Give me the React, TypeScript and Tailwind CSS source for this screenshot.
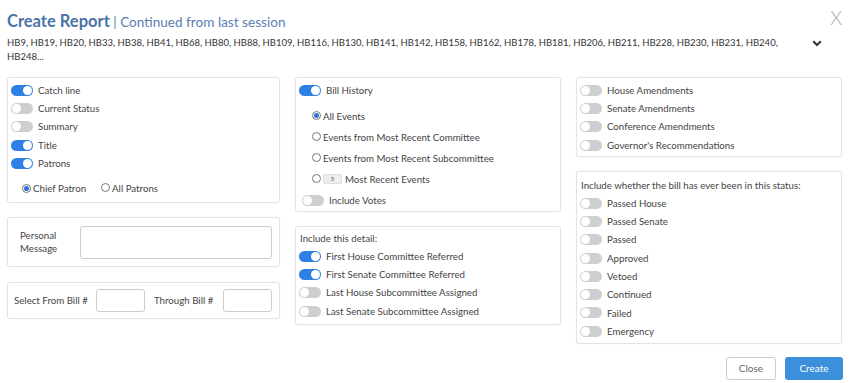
import React from "react";

const Toggle = ({ on }: { on?: boolean }) => (
  <span
    className={`relative inline-block w-[22px] h-[11px] rounded-full shrink-0 ${on ? "bg-[#2f80e4]" : "bg-[#cfcfcf]"}`}
  >
    <span
      className={`absolute top-[1px] w-[9px] h-[9px] rounded-full bg-white ${on ? "left-[12px]" : "left-[1px]"}`}
    />
  </span>
);

const Radio = ({ on }: { on?: boolean }) => (
  <span className="relative inline-block w-[9px] h-[9px] rounded-full border border-[#777] bg-white shrink-0">
    {on && <span className="absolute left-[1px] top-[1px] w-[5px] h-[5px] rounded-full bg-[#2f6fe0]" />}
  </span>
);

const TRow = ({ on, label, h = "h-[18.3px]" }: { on?: boolean; label: string; h?: string }) => (
  <div className={`flex items-center gap-[5px] ${h}`}>
    <Toggle on={on} />
    <span>{label}</span>
  </div>
);

const Box = ({ className = "", children }: { className?: string; children: React.ReactNode }) => (
  <div className={`border border-[#e3e3e3] rounded-[3px] shadow-[0_0_2px_rgba(0,0,0,0.06)] bg-white ${className}`}>
    {children}
  </div>
);

export default function App() {
  const bills =
    "HB9, HB19, HB20, HB33, HB38, HB41, HB68, HB80, HB88, HB109, HB116, HB130, HB141, HB142, HB158, HB162, HB178, HB181, HB206, HB211, HB228, HB230, HB231, HB240, HB248...";
  return (
    <div
      className="w-[850px] h-[383px] bg-white text-[#444] text-[9.7px] relative overflow-hidden"
      style={{ fontFamily: "Lato, 'Noto Sans', sans-serif" }}
    >
      <div className="flex justify-between items-start pl-[7px] pr-[8px] pt-[10px]">
        <div className="leading-[22px] text-[#4a72aa]">
          <span className="font-bold text-[16.5px]">Create Report</span>
          <span className="text-[#5b80b4] text-[13.6px]"> | Continued from last session</span>
        </div>
        <span className="text-[19px] leading-[18px] text-[#aaa] font-light mt-[-1px]">X</span>
      </div>
      <div className="flex items-start pl-[7px] pr-[22px] mt-[2px]">
        <div className="w-[790px] leading-[14px] text-[#333] text-[9.5px]">{bills}</div>
        <svg width="10" height="7" viewBox="0 0 10 7" className="ml-[15px] mt-[4px]">
          <path d="M1.2 1.2 L5 5 L8.8 1.2" stroke="#333" strokeWidth="2" fill="none" />
        </svg>
      </div>

      <div className="grid grid-cols-[273px_266px_266px] gap-x-[15px] px-[7px] mt-[13px]">
        {/* left column */}
        <div className="flex flex-col">
          <Box className="h-[126px] pl-[3px] pt-[3px]">
            <TRow on label="Catch line" />
            <TRow label="Current Status" />
            <TRow label="Summary" />
            <TRow on label="Title" />
            <TRow on label="Patrons" />
            <div className="flex items-center h-[14px] mt-[9px] pl-[11px]">
              <Radio on />
              <span className="ml-[2px]">Chief Patron</span>
              <span className="ml-[15px]"><Radio /></span>
              <span className="ml-[2px]">All Patrons</span>
            </div>
          </Box>
          <Box className="h-[50px] mt-[14px] flex items-center pl-[12px] pr-[7px]">
            <div className="w-[60px] leading-[13px]">
              Personal
              <br />
              Message
            </div>
            <div className="flex-1 h-[33px] border border-[#ccc] rounded-[3px]" />
          </Box>
          <Box className="h-[37px] mt-[15px] flex items-center pl-[6px] pr-[7px]">
            <span className="w-[83px]">Select From Bill #</span>
            <div className="w-[49px] h-[23px] border border-[#ccc] rounded-[3px]" />
            <span className="ml-[9px] w-[70px]">Through Bill #</span>
            <div className="w-[49px] h-[23px] border border-[#ccc] rounded-[3px]" />
          </Box>
        </div>

        {/* middle column */}
        <div className="flex flex-col">
          <Box className="h-[135px] pl-[3px] pt-[3px]">
            <TRow on label="Bill History" />
            <div className="pl-[13px] mt-[6px]">
              <div className="flex items-center gap-[2px] h-[21px]">
                <Radio on />
                <span>All Events</span>
              </div>
              <div className="flex items-center gap-[2px] h-[21px]">
                <Radio />
                <span>Events from Most Recent Committee</span>
              </div>
              <div className="flex items-center gap-[2px] h-[21px]">
                <Radio />
                <span>Events from Most Recent Subcommittee</span>
              </div>
              <div className="flex items-center gap-[2px] h-[21px]">
                <Radio />
                <span className="w-[19px] h-[10px] bg-[#eee] border border-[#ddd] rounded-[2px] text-[6px] leading-[8px] text-center text-[#555]">5</span>
                <span className="ml-[1px]">Most Recent Events</span>
              </div>
            </div>
            <div className="pl-[3px] mt-[1px]">
              <TRow label="Include Votes" h="h-[20px]" />
            </div>
          </Box>
          <Box className="h-[99px] mt-[14px] pl-[3px] pt-[3px]">
            <div className="h-[17px] flex items-center pl-[1px]">Include this detail:</div>
            <TRow on label="First House Committee Referred" />
            <TRow on label="First Senate Committee Referred" />
            <TRow label="Last House Subcommittee Assigned" />
            <TRow label="Last Senate Subcommittee Assigned" />
          </Box>
        </div>

        {/* right column */}
        <div className="flex flex-col">
          <Box className="h-[80px] pl-[3px] pt-[3px]">
            <TRow label="House Amendments" />
            <TRow label="Senate Amendments" />
            <TRow label="Conference Amendments" />
            <TRow label="Governor's Recommendations" />
          </Box>
          <Box className="h-[173px] mt-[14px] pl-[3px] pt-[4px]">
            <div className="h-[18px] flex items-center pl-[1px]">Include whether the bill has ever been in this status:</div>
            <TRow label="Passed House" />
            <TRow label="Passed Senate" />
            <TRow label="Passed" />
            <TRow label="Approved" />
            <TRow label="Vetoed" />
            <TRow label="Continued" />
            <TRow label="Failed" />
            <TRow label="Emergency" />
          </Box>
        </div>
      </div>

      <div className="absolute right-[7px] bottom-[3px] flex gap-[9px]">
        <button className="w-[50px] h-[23px] border border-[#ccc] rounded-[3px] text-[#666] bg-white text-[10px]">Close</button>
        <button className="w-[58px] h-[23px] rounded-[3px] text-white bg-[#3b8fdb] text-[10px]">Create</button>
      </div>
    </div>
  );
}
